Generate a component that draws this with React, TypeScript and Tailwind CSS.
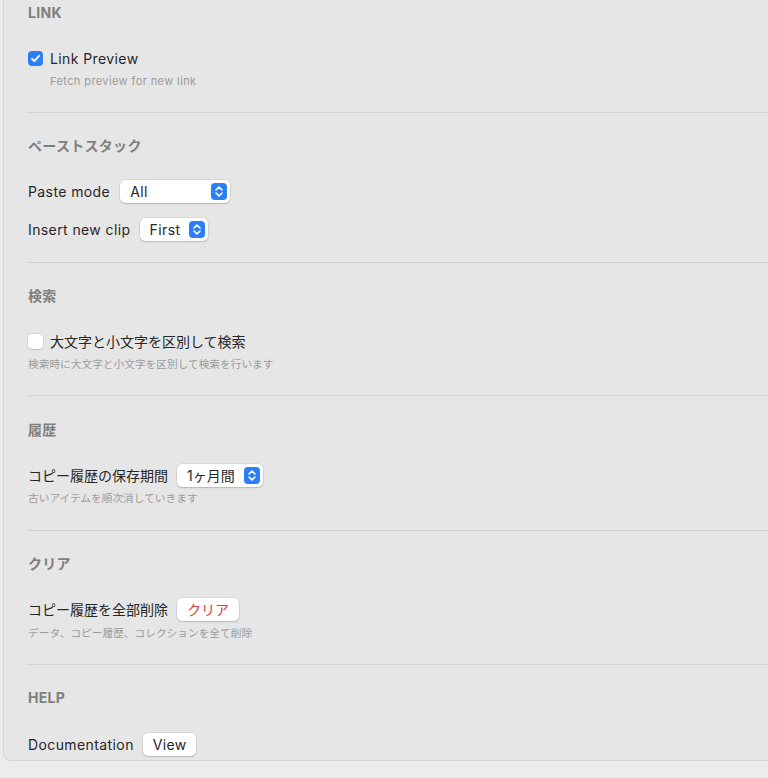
import type { ReactNode } from 'react';

const font = { fontFamily: 'Inter, "Noto Sans CJK JP", sans-serif' };

function Header({ children }: { children: ReactNode }) {
  return <div className="h-5 text-[14px] font-bold leading-5 tracking-[0.3px] text-[#7f7f7f]">{children}</div>;
}

function Desc({ children, className = '' }: { children: ReactNode; className?: string }) {
  return <div className={`text-[10.7px] leading-[14px] text-[#9c9c9c] ${className}`}>{children}</div>;
}

function Label({ children, latin }: { children: ReactNode; latin?: boolean }) {
  return <span className={`text-[14px] text-[#262626] ${latin ? 'tracking-[0.4px]' : ''}`}>{children}</span>;
}

function Chevrons() {
  return (
    <span className="flex h-[17px] w-[16px] items-center justify-center rounded-[4px] bg-[#2b7ff6]">
      <svg width="16" height="17" viewBox="0 0 16 17" fill="none">
        <path d="M5 7 L8 4.2 L11 7" stroke="white" strokeWidth="1.6" strokeLinecap="round" strokeLinejoin="round" />
        <path d="M5 10 L8 12.8 L11 10" stroke="white" strokeWidth="1.6" strokeLinecap="round" strokeLinejoin="round" />
      </svg>
    </span>
  );
}

function Select({ value, width, latin }: { value: string; width?: string; latin?: boolean }) {
  return (
    <div
      className={`flex h-[23px] items-center gap-[9px] rounded-[5px] bg-white pl-[10px] pr-[3px] shadow-[0_0_0_0.5px_rgba(0,0,0,0.12),0_1px_1.5px_rgba(0,0,0,0.16)] ${width ?? ''}`}
    >
      <span className={`flex-1 text-[14px] text-[#262626] ${latin ? 'tracking-[0.4px]' : ''}`}>{value}</span>
      <Chevrons />
    </div>
  );
}

function Button({ children, red }: { children: ReactNode; red?: boolean }) {
  return (
    <button
      className={`flex h-[23px] items-center rounded-[5px] bg-white px-[10px] text-[14px] shadow-[0_0_0_0.5px_rgba(0,0,0,0.12),0_1px_1.5px_rgba(0,0,0,0.16)] ${red ? 'text-[#d93b3b]' : 'tracking-[0.3px] text-[#262626]'}`}
    >
      {children}
    </button>
  );
}

function Checkbox({ checked }: { checked?: boolean }) {
  if (checked) {
    return (
      <span className="flex h-[15px] w-[15px] items-center justify-center rounded-[4px] bg-[#2b7ff6]">
        <svg width="11" height="11" viewBox="0 0 11 11" fill="none">
          <path d="M2 5.8 L4.4 8.2 L9 2.8" stroke="white" strokeWidth="1.9" strokeLinecap="round" strokeLinejoin="round" />
        </svg>
      </span>
    );
  }
  return <span className="h-[15px] w-[15px] rounded-[4px] bg-white shadow-[0_0_0_0.5px_rgba(0,0,0,0.15),0_1px_1px_rgba(0,0,0,0.1)]" />;
}

export default function App() {
  return (
    <div className="min-h-screen bg-[#ececec] pl-[3px]" style={font}>
      <div className="rounded-bl-[8px] border-b border-l border-[#d4d4d4] bg-[#e6e6e6] pl-[24px]">
        {/* LINK */}
        <section className="pt-[3px] pb-[24px]">
          <Header>LINK</Header>
          <div className="mt-[23px] flex h-6 items-center gap-[7px]">
            <Checkbox checked />
            <Label latin>Link Preview</Label>
          </div>
          <Desc className="mt-[4px] pl-[22px] text-[11px] tracking-[0.4px]">Fetch preview for new link</Desc>
        </section>

        <section className="border-t border-[#d3d3d3] pt-[23px] pb-[21px]">
          <Header>ペーストスタック</Header>
          <div className="mt-[23px] flex h-6 items-center gap-[10px]">
            <Label latin>Paste mode</Label>
            <Select value="All" width="w-[110px]" latin />
          </div>
          <div className="mt-[14px] flex h-6 items-center gap-[9px]">
            <Label latin>Insert new clip</Label>
            <Select value="First" latin />
          </div>
        </section>

        <section className="border-t border-[#d3d3d3] pt-[23px] pb-[23px]">
          <Header>検索</Header>
          <div className="mt-[23px] flex h-6 items-center gap-[7px]">
            <Checkbox />
            <Label>大文字と小文字を区別して検索</Label>
          </div>
          <Desc className="mt-[5px]">検索時に大文字と小文字を区別して検索を行います</Desc>
        </section>

        <section className="border-t border-[#d3d3d3] pt-[24px] pb-[24px]">
          <Header>履歴</Header>
          <div className="mt-[23px] flex h-6 items-center gap-[9px]">
            <Label>コピー履歴の保存期間</Label>
            <Select value="1ヶ月間" />
          </div>
          <Desc className="mt-[5px]">古いアイテムを順次消していきます</Desc>
        </section>

        <section className="border-t border-[#d3d3d3] pt-[23px] pb-[23px]">
          <Header>クリア</Header>
          <div className="mt-[23px] flex h-6 items-center gap-[9px]">
            <Label>コピー履歴を全部削除</Label>
            <Button red>クリア</Button>
          </div>
          <Desc className="mt-[6px]">データ、コピー履歴、コレクションを全て削除</Desc>
        </section>

        <section className="border-t border-[#d3d3d3] pt-[23px] pb-[4px]">
          <Header>HELP</Header>
          <div className="mt-[24px] flex h-6 items-center gap-[9px]">
            <Label latin>Documentation</Label>
            <Button>View</Button>
          </div>
        </section>
      </div>
    </div>
  );
}
